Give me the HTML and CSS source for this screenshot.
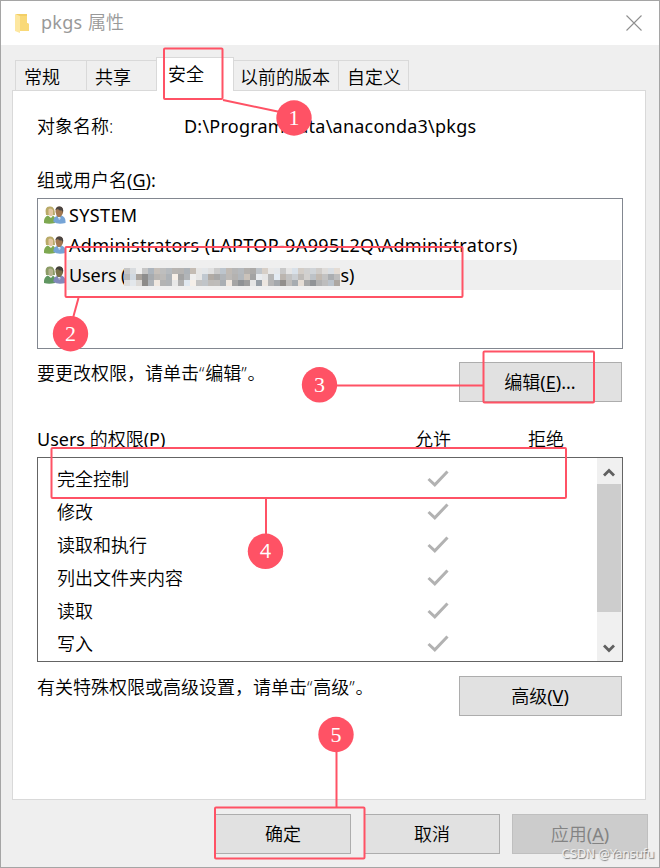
FILE: index.html
```html
<!DOCTYPE html>
<html lang="zh-CN">
    <head>
        <meta charset="UTF-8" />
        <title>pkgs 属性</title>
        <link rel="stylesheet" href="styles.css">
        <script src="mosaic.js" type="text/javascript"></script>
    </head>
    <body onload="main();">
        <!-- shared icons -->
        <svg width="0" height="0" class="defs">
            <symbol id="users" viewBox="0 0 22 18">
                <path d="M2 9Q0 0 6 .5Q11 0 11 9Z" fill="#b9aa68"/>
                <path d="M4.500 3.500Q6 1.500 9 4V9Q6 12 4.500 8Z" fill="#e2c6a0"/>
                <path d="M0 17Q-.5 11 4 9.500L7 12L9 9.500Q12 11 11 17Q5 18.500 0 17Z" fill="#7ea851"/>
                <path d="M11.500 6Q11 .5 15.500 .5Q20 .5 19 7L17 11H13Z" fill="#a27850"/>
                <path d="M11.500 4Q12 0 16 .5Q20 1 19 7L18 4.500Q15 5 14 3Z" fill="#4b4542"/>
                <path d="M9.500 16Q9 11.500 13 10L15 12.500L17.500 9.500Q22 11 21.500 17Q14 19 9.500 16Z" fill="#76a4d6"/>
                <path d="M14 11.500L15 12.500L16.500 11V13L15 14Z" fill="#c5daf0"/>
            </symbol>
            <symbol id="check" viewBox="0 0 22 18">
                <path d="M1.500 9L7.800 14.800L20.500 1.500" fill="none" stroke="#b2b2b2" stroke-width="3"/>
            </symbol>
        </svg>

        <div class="window">
            <div class="title_bar">
                <svg class="folder" width="15" height="21" viewBox="0 0 15 21">
                    <path d="M1 1H12V10L14 11V18H5Z" fill="#f3cf66"/>
                    <path d="M0 1L5 3V20L0 18Z" fill="#fde7a0"/>
                    <path d="M5 3H12V10L14 11V18H5Z" fill="#f9d978"/>
                </svg>
                <span class="title"><span class="latin path">pkgs</span> 属性</span>
                <svg class="close" width="16" height="16" viewBox="0 0 16 16">
                    <path d="M.5 .5L15.500 15.500M15.500 .5L.5 15.500" stroke="#8f8f8f" stroke-width="1.100"/>
                </svg>
            </div>

            <div class="tabs">
                <div class="tab tab_general">常规</div>
                <div class="tab tab_share">共享</div>
                <div class="tab tab_active">安全</div>
                <div class="tab tab_versions">以前的版本</div>
                <div class="tab tab_custom">自定义</div>
            </div>

            <div class="panel">
                <div class="object_row"><span class="object_label">对象名称:</span><span class="latin path">D:\ProgramData\anaconda3\pkgs</span></div>
                <div class="group_label">组或用户名<span class="latin">(<u>G</u>):</span></div>
                <div class="user_list latin">
                    <div class="user"><svg class="user_icon"><use href="#users"/></svg><span class="user_name">SYSTEM</span></div>
                    <div class="user"><svg class="user_icon"><use href="#users"/></svg><span class="user_name">Administrators (LAPTOP-9A995L2Q\Administrators)</span></div>
                    <div class="user"><svg class="user_icon icon_selected"><use href="#users"/></svg><span class="user_name user_selected">Users (<span id="mosaic"></span>s)</span></div>
                </div>
                <div class="action_row edit_row"><span>要更改权限，请单击<q>编辑</q>。</span><div class="button wide">编辑<span class="latin">(<u>E</u>)...</span></div></div>
                <div class="perm_header"><span class="perm_title"><span class="latin">Users</span> 的权限<span class="latin">(P)</span></span><span class="perm_allow">允许</span><span>拒绝</span></div>
                <div class="perm_box">
                    <div class="perm_list">
                        <div class="perm"><span>完全控制</span><svg class="check"><use href="#check"/></svg></div>
                        <div class="perm"><span>修改</span><svg class="check"><use href="#check"/></svg></div>
                        <div class="perm"><span>读取和执行</span><svg class="check"><use href="#check"/></svg></div>
                        <div class="perm"><span>列出文件夹内容</span><svg class="check"><use href="#check"/></svg></div>
                        <div class="perm"><span>读取</span><svg class="check"><use href="#check"/></svg></div>
                        <div class="perm"><span>写入</span><svg class="check"><use href="#check"/></svg></div>
                    </div>
                    <div class="scrollbar">
                        <svg width="12" height="9" viewBox="0 0 12 9"><path d="M1 7.500L6 2.500L11 7.500" fill="none" stroke="#606060" stroke-width="2.800"/></svg>
                        <div class="thumb"></div>
                        <svg class="arrow_down" width="12" height="9" viewBox="0 0 12 9"><path d="M1 1.500L6 6.500L11 1.500" fill="none" stroke="#606060" stroke-width="2.800"/></svg>
                    </div>
                </div>
                <div class="action_row advanced_row"><span>有关特殊权限或高级设置，请单击<q>高级</q>。</span><div class="button wide">高级<span class="latin">(<u>V</u>)</span></div></div>
            </div>

            <div class="footer">
                <div class="button ok">确定</div>
                <div class="button">取消</div>
                <div class="button disabled">应用<span class="latin">(<u>A</u>)</span></div>
            </div>
        </div>

        <!-- numbered steps drawn over the dialog -->
        <svg class="steps" width="660" height="868" viewBox="0 0 660 868">
            <g class="marks">
                <rect x="164" y="48.500" width="58.500" height="50.500" rx="1"/>
                <path d="M223 100L280 112"/>
                <rect x="65.500" y="247" width="397" height="50" rx="1"/>
                <path d="M78.500 298L73 318"/>
                <rect x="483.500" y="351.500" width="110.500" height="51" rx="1"/>
                <path d="M336 385.500H483"/>
                <rect x="51.500" y="448" width="514.500" height="50" rx="1"/>
                <path d="M266 499V535"/>
                <rect x="215" y="807.500" width="149.500" height="51" rx="1"/>
                <path d="M336.500 751V807"/>
            </g>
            <g class="dots">
                <circle cx="294" cy="118" r="17.700"/>
                <circle cx="70.500" cy="333.700" r="17.700"/>
                <circle cx="319.500" cy="384.800" r="17.700"/>
                <circle cx="265.500" cy="551.300" r="17.700"/>
                <circle cx="336" cy="734.500" r="17.700"/>
            </g>
            <g class="numbers">
                <text x="294" y="125">1</text>
                <text x="70.500" y="341">2</text>
                <text x="319.500" y="392">3</text>
                <text x="265.500" y="558" class="number_sans">4</text>
                <text x="336" y="741.500">5</text>
            </g>
        </svg>
        <div class="watermark">CSDN @Yansufu</div>
    </body>
</html>
```
FILE: styles.css
```css
body {
    margin: 0;
    background: #efefef;
    color: #000;
    font: 350 18px/30px "Open Sans", "Noto Sans CJK SC", sans-serif;
}
.latin {
    font-family: "Noto Sans", "Noto Sans CJK SC", sans-serif;
    font-weight: 400;
}
.path { letter-spacing: .23px; }
.defs { position: absolute; }
.window {
    box-sizing: border-box;
    width: 660px;
    height: 868px;
    border: 1px solid #a5a5a5;
    overflow: hidden;
    white-space: nowrap;
}
.title_bar {
    display: flex;
    align-items: center;
    height: 44px;
    padding: 0 17px 0 14px;
    background: #fff;
    color: #999;
}
.title { margin-left: 11px; margin-top: -2px; word-spacing: 1px; }
.close { margin-left: auto; }

.tabs {
    display: flex;
    align-items: flex-end;
    height: 45px;
    padding-left: 14px;
}
.tab {
    box-sizing: border-box;
    height: 30px;
    line-height: 32px;
    padding-left: 8px;
    border: 1px solid #d9d9d9;
    border-width: 1px 0 0 1px;
}
.tab_general { width: 71px; }
.tab_share { width: 70px; }
.tab_active {
    width: 78px;
    height: 34px;
    line-height: 33px;
    margin-bottom: -1px;
    padding-left: 11px;
    border-right-width: 1px;
    background: #fff;
    position: relative;
}
.tab_versions { width: 104px; padding-left: 6px; border-left: 0; }
.tab_custom { width: 71px; border-right-width: 1px; }

.panel {
    box-sizing: border-box;
    width: 634px;
    height: 710px;
    margin-left: 11px;
    padding: 20px 22px 0 24px;
    border: 1px solid #d9d9d9;
    background: #fff;
}
.object_row { display: flex; }
.object_label { width: 147px; }
.group_label { height: 30px; margin-top: 24px; }
u { text-decoration-thickness: 1px; text-underline-offset: 2px; }
q { quotes: "“" "”"; }
q::before, q::after { letter-spacing: .8px; }

.user_list {
    box-sizing: border-box;
    width: 586px;
    height: 151px;
    margin-top: 3px;
    padding: 1px 1px 0 6px;
    border: 1px solid #828790;
}
.user { display: flex; align-items: center; height: 30px; }
.user_icon { width: 22px; height: 18px; margin-right: 1px; }
.icon_selected { filter: hue-rotate(25deg) saturate(.8) brightness(.88); }
.user_name { padding-left: 2px; flex: 1; letter-spacing: .36px; }
.user_selected { display: flex; align-items: center; background: #efefef; letter-spacing: -.1px; }
#mosaic {
    display: grid;
    grid-template-columns: repeat(36, 6px);
    grid-auto-rows: 6px;
    margin: 3px 0 0 -2px;
}

.action_row { display: flex; justify-content: space-between; width: 585px; }
.edit_row { margin-top: 13px; }
.edit_row > span, .advanced_row > span { line-height: 23px; }
.button {
    box-sizing: border-box;
    width: 136px;
    height: 40px;
    line-height: 39px;
    border: 1px solid #adadad;
    background: #e1e1e1;
    text-align: center;
}
.wide { width: 163px; padding-right: 1px; }
.disabled { background: #ccc; border-color: #bfbfbf; color: #838383; }

.perm_header { display: flex; height: 30px; line-height: 28px; margin-top: 23px; }
.perm_title { width: 378px; }
.perm_allow { width: 113px; }
.perm_box {
    box-sizing: border-box;
    display: flex;
    width: 586px;
    height: 205px;
    margin-top: 2px;
    border: 1px solid #646464;
}
.perm_list { flex: 1; padding: 4px 0 0 19px; }
.perm { display: flex; align-items: center; height: 33px; }
.perm span { width: 370px; }
.check { width: 22px; height: 18px; margin-top: 1px; }
.scrollbar {
    box-sizing: border-box;
    display: flex;
    flex-direction: column;
    align-items: center;
    width: 25px;
    padding: 10px 1px 8px 0;
    background: #f0f0f0;
}
.thumb { width: 24px; height: 128px; margin-top: 7px; background: #cdcdcd; }
.arrow_down { margin-top: auto; }
.advanced_row { margin-top: 14px; }

.footer {
    display: flex;
    justify-content: flex-end;
    gap: 12px;
    padding: 14px 11px 0 0;
}
.ok { margin-right: 1px; }

/* step markers */
.steps { position: absolute; left: 0; top: 0; }
.marks { fill: none; stroke: #ff5265; stroke-width: 2; }
.dots { fill: #ff5265; }
.numbers {
    fill: #fff;
    font: 22px "Liberation Serif", serif;
    text-anchor: middle;
}
.number_sans { font: 20px "Open Sans", sans-serif; }
.watermark {
    position: absolute;
    right: 6px;
    bottom: 6px;
    font: 12px/16px "DejaVu Sans", sans-serif;
    color: #eee;
    text-shadow: 1px 1px 1px #777;
    letter-spacing: -.3px;
}
```
FILE: mosaic.js
```javascript
// grey blocks over the machine name, one hex pair per block
var rows = [
    'c6dcefc6b5c0bebab5b4b2bce6e6e0cbc5bab6b9b0aac5cfe8e8c8e5e1cdd0d4ccdcdedc',
    'b8d9a38dabb6bab2efa3b5efe6c8aba8b5bab2b7c2a3ece6b6ebb5c2cebbd0c2b9c2aebd',
    'dee7d98bb4e8b3b3e8b0e8efc3c4bbbcafe8a5929ee59fe6b5a88fbdacdda793b2bdc3a7'
];
// warm or cool tint, so that the blocks are not all plain grey
var tints = [0, 6, -5, 0, 3, -3, 0, 8, -8, 2, 0, -4];

function main() {
    var e_mosaic = document.getElementById('mosaic');
    for (var y = 0; y < rows.length; ++y) {
        for (var x = 0; x < 36; ++x) {
            var v = parseInt(rows[y].substr(x * 2, 2), 16);
            var t = tints[(x * 5 + y * 3) % tints.length];
            var block = document.createElement('i');
            block.style.backgroundColor = 'rgb(' + (v + t) + ',' + v + ',' + (v - t) + ')';
            e_mosaic.appendChild(block);
        }
    }
}
```
